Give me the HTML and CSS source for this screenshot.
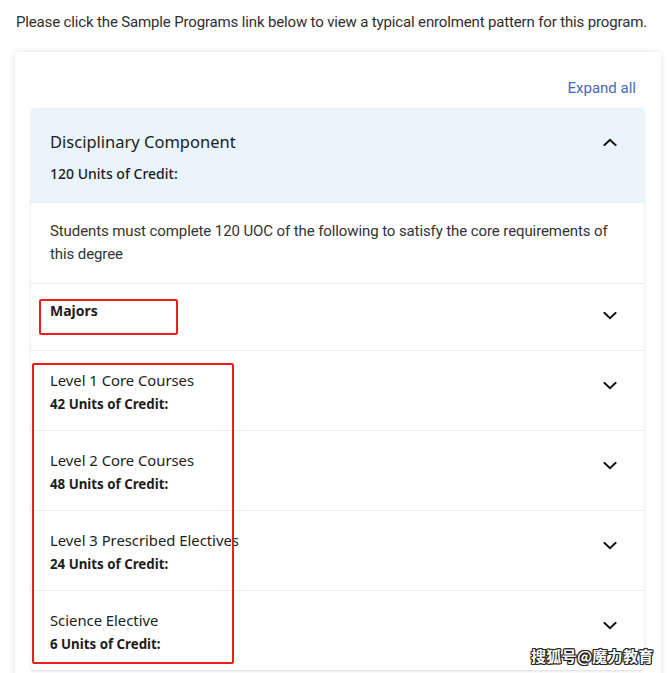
FILE: index.html
```html
<!DOCTYPE html>
<html lang="en">
<head>
<meta charset="utf-8">
<title>Program Structure</title>
<link rel="stylesheet" href="styles.css">
</head>
<body>
<p class="intro">Please click the Sample Programs link below to view a typical enrolment pattern for this program.</p>

<section class="card">
  <div class="toolbar"><a class="expand-all" href="#">Expand all</a></div>

  <div class="accordion">
    <div class="acc-head">
      <div class="acc-text">
        <h3 class="acc-title">Disciplinary Component</h3>
        <div class="acc-units">120 Units of Credit:</div>
      </div>
      <svg class="chev up" viewBox="0 0 14 8" width="14" height="8"><path d="M1.5 7 L7 1.8 L12.5 7" /></svg>
    </div>

    <div class="acc-body">
      <p>Students must complete 120 UOC of the following to satisfy the core requirements of this degree</p>
    </div>

    <div class="row row-majors">
      <div class="row-text">
        <div class="row-title bold">Majors</div>
      </div>
      <svg class="chev" viewBox="0 0 14 8" width="14" height="8"><path d="M1.5 1 L7 6.2 L12.5 1" /></svg>
    </div>

    <div class="row">
      <div class="row-text">
        <div class="row-title">Level 1 Core Courses</div>
        <div class="row-units">42 Units of Credit:</div>
      </div>
      <svg class="chev" viewBox="0 0 14 8" width="14" height="8"><path d="M1.5 1 L7 6.2 L12.5 1" /></svg>
    </div>

    <div class="row">
      <div class="row-text">
        <div class="row-title">Level 2 Core Courses</div>
        <div class="row-units">48 Units of Credit:</div>
      </div>
      <svg class="chev" viewBox="0 0 14 8" width="14" height="8"><path d="M1.5 1 L7 6.2 L12.5 1" /></svg>
    </div>

    <div class="row">
      <div class="row-text">
        <div class="row-title">Level 3 Prescribed Electives</div>
        <div class="row-units">24 Units of Credit:</div>
      </div>
      <svg class="chev" viewBox="0 0 14 8" width="14" height="8"><path d="M1.5 1 L7 6.2 L12.5 1" /></svg>
    </div>

    <div class="row">
      <div class="row-text">
        <div class="row-title">Science Elective</div>
        <div class="row-units">6 Units of Credit:</div>
      </div>
      <svg class="chev" viewBox="0 0 14 8" width="14" height="8"><path d="M1.5 1 L7 6.2 L12.5 1" /></svg>
    </div>
  </div>
</section>

<!-- hand-drawn highlight boxes -->
<div class="mark mark-majors"></div>
<div class="mark mark-levels"></div>

<div class="watermark">搜狐号@魔力教育</div>
</body>
</html>
```

FILE: styles.css
```css
html, body {
  margin: 0;
  padding: 0;
  background: #ffffff;
}

body {
  position: relative;
  height: 673px;
  overflow: hidden;
  padding: 11px 9px 0 15px;
  box-sizing: border-box;
  font-family: Roboto, "Liberation Sans", sans-serif;
  color: #333333;
}

.intro {
  margin: 0 0 19px 1px;
  font-size: 15px;
  line-height: 22px;
  color: #2e2e2e;
  letter-spacing: -0.15px;
}

.card {
  background: #ffffff;
  box-shadow: 0 0 6px rgba(0, 0, 0, 0.12);
  border-radius: 3px;
  padding: 25px 17px 20px 16px;
}

.toolbar {
  display: flex;
  justify-content: flex-end;
  padding-right: 8px;
  height: 22px;
  margin-bottom: 9px;
}

.expand-all {
  font-size: 15px;
  line-height: 22px;
  color: #3d6cbf;
  text-decoration: none;
}

.accordion {
  background: #ffffff;
  border-radius: 3px;
  box-shadow: 0 1px 3px rgba(0, 0, 0, 0.16);
  font-family: "Noto Sans", "Open Sans", sans-serif;
  color: #1c1c1c;
}

.acc-head {
  background: #e9f4fb;
  display: flex;
  justify-content: space-between;
  align-items: flex-start;
  padding: 22px 27px 19px 19px;
  border-radius: 3px 3px 0 0;
}

.acc-title {
  margin: 0;
  font-size: 16.5px;
  font-weight: 400;
  line-height: 24px;
}

.acc-units {
  margin-top: 10px;
  font-size: 14px;
  font-weight: 500;
  line-height: 20px;
}

.chev {
  flex: none;
  fill: none;
  stroke: #111111;
  stroke-width: 2;
  stroke-linecap: square;
}

.chev.up {
  margin-top: 8px;
}

.acc-body {
  padding: 17px 19px 17px 19px;
  border-bottom: 1px solid #ebebeb;
}

.acc-body p {
  margin: 0;
  font-family: Roboto, "Liberation Sans", sans-serif;
  font-size: 15px;
  line-height: 23px;
  color: #333333;
  letter-spacing: -0.1px;
  padding-right: 10px;
}

.row {
  display: flex;
  justify-content: space-between;
  align-items: flex-start;
  padding: 18px 27px 16px 19px;
  border-bottom: 1px solid #ebebeb;
}

.row:last-child {
  border-bottom: none;
}

.row-majors {
  padding-top: 16px;
  padding-bottom: 28px;
}

.row-title {
  font-size: 14.8px;
  line-height: 22px;
}

.row-title.bold {
  font-weight: 700;
  font-size: 14px;
}

.row-units {
  margin-top: 3px;
  font-size: 13.3px;
  font-weight: 700;
  line-height: 20px;
}

.row .chev {
  margin-top: 13px;
}

.row-majors .chev {
  margin-top: 12px;
}

.mark {
  position: absolute;
  border: 2.5px solid #f01c1c;
  border-radius: 2px;
  box-sizing: border-box;
}

.mark-majors {
  left: 39px;
  top: 299px;
  width: 139px;
  height: 36px;
}

.mark-levels {
  left: 32px;
  top: 363px;
  width: 202px;
  height: 301px;
}

.watermark {
  position: absolute;
  left: 531px;
  top: 645px;
  font-family: "Noto Sans CJK SC", sans-serif;
  font-weight: 700;
  font-size: 15px;
  line-height: 22px;
  color: #ffffff;
  letter-spacing: 0.3px;
  text-shadow:
    1px 0 0 #222, -1px 0 0 #222, 0 1px 0 #222, 0 -1px 0 #222,
    1px 1px 0 #222, -1px -1px 0 #222, 1px -1px 0 #222, -1px 1px 0 #222;
}
```
